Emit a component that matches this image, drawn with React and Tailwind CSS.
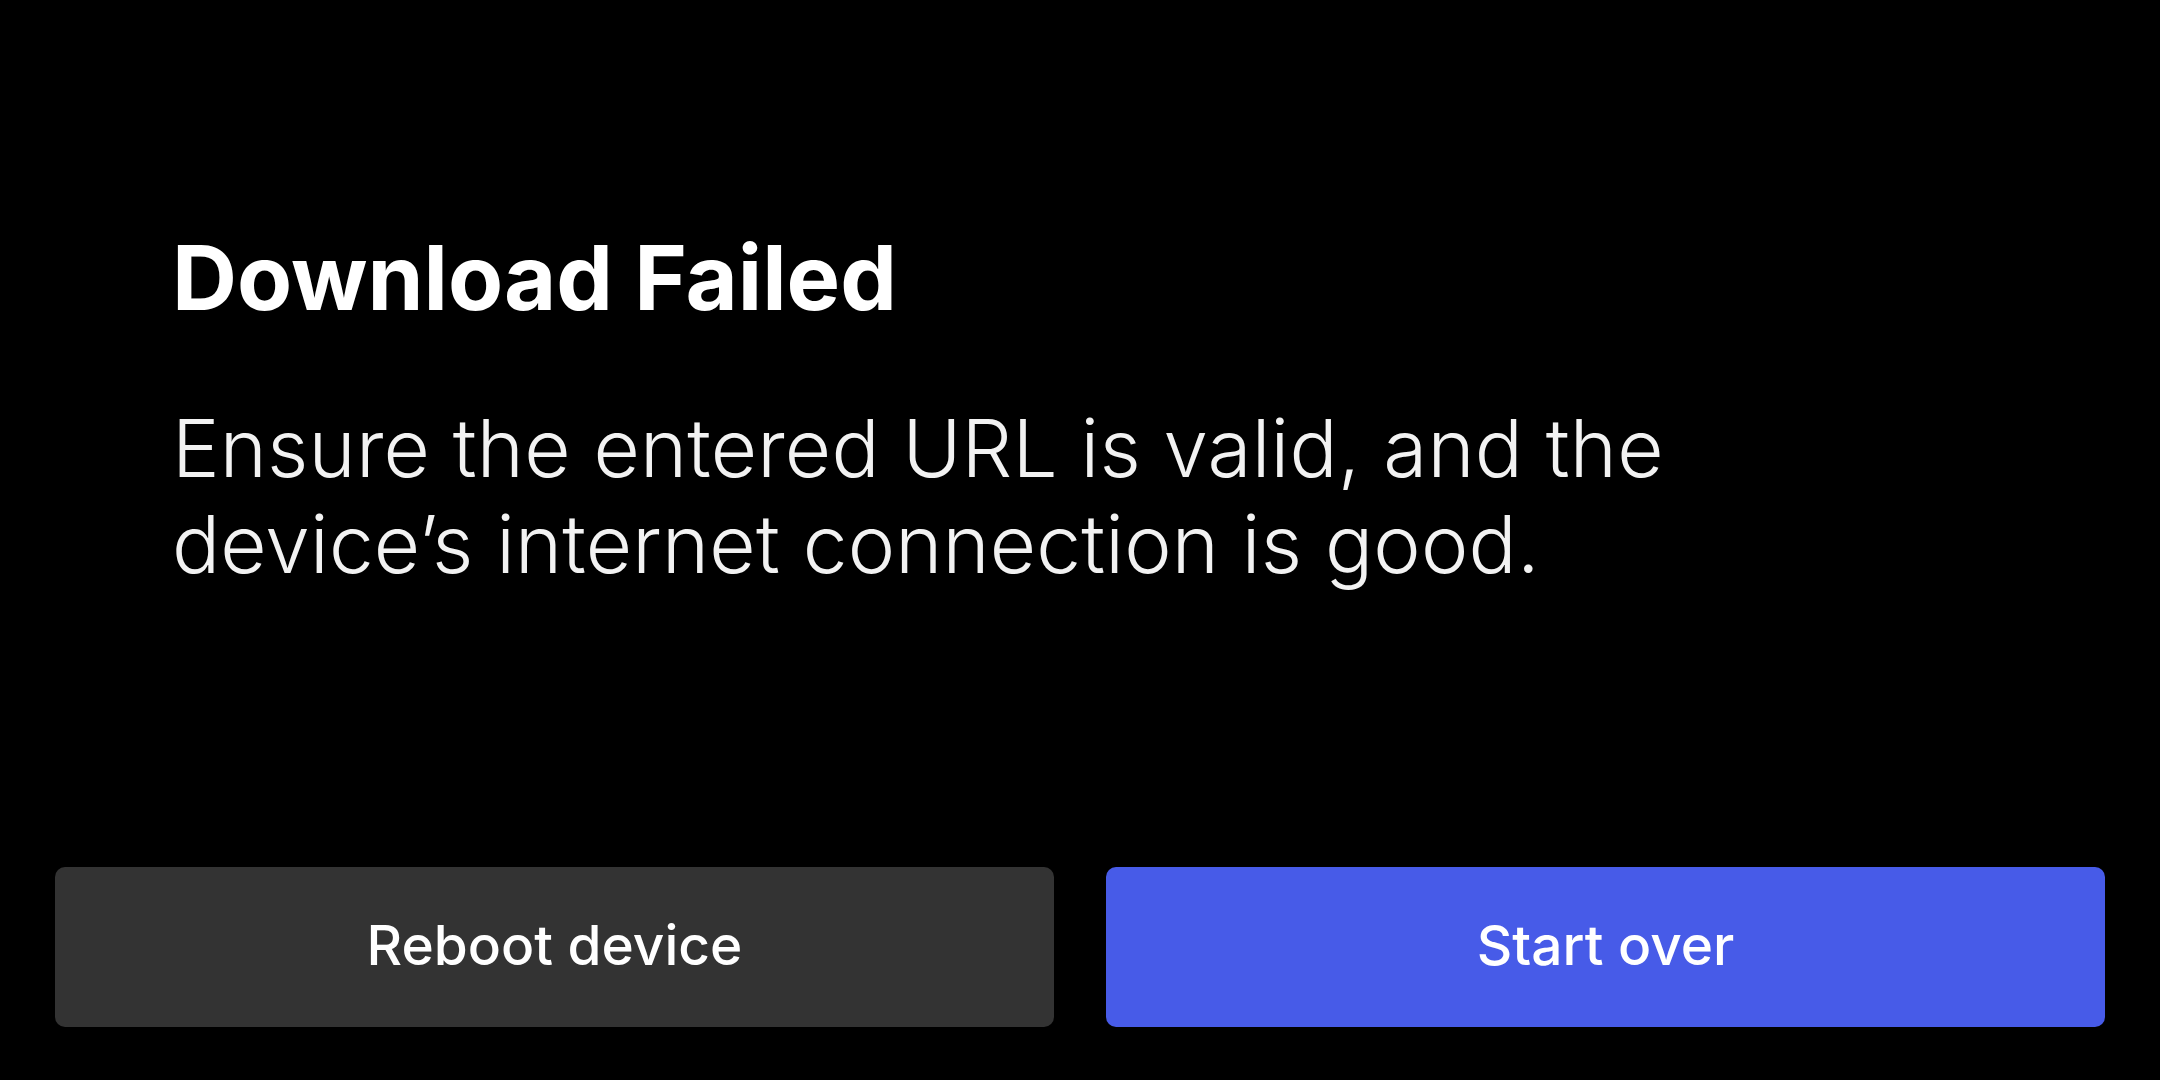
export default function App() {
  return (
    <div
      className="w-[2160px] h-[1080px] bg-black flex flex-col overflow-hidden"
      style={{ fontFamily: "Inter, 'Noto Sans', sans-serif" }}
    >
      <div className="pt-[233px] px-[172px]">
        <h1 className="text-[90px] leading-none font-bold text-white">Download Failed</h1>
        <p className="mt-[77px] text-[80px] leading-[96px] font-light text-[#f2f2f2] max-w-[1800px] tracking-[0.2px]">
          Ensure the entered URL is valid, and the device’s internet connection is good.
        </p>
      </div>
      <div className="mt-auto px-[55px] pb-[53px] flex gap-[52px]">
        <button className="flex-1 h-[160px] pb-[4px] rounded-[10px] bg-[#333333] text-white text-[55px] font-medium flex items-center justify-center">
          Reboot device
        </button>
        <button className="flex-1 h-[160px] pb-[4px] rounded-[10px] bg-[#475be8] text-white text-[55px] font-medium flex items-center justify-center">
          Start over
        </button>
      </div>
    </div>
  );
}
